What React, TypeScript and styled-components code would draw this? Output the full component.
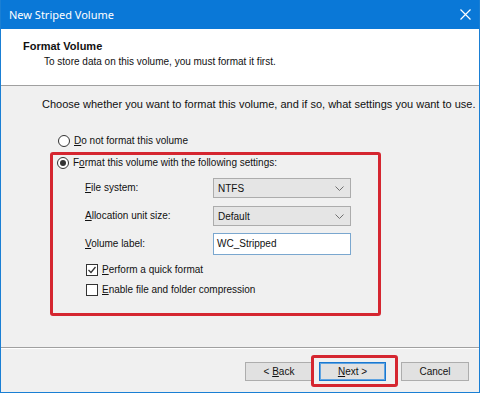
import React from "react";
import styled, { createGlobalStyle } from "styled-components";

const GlobalStyle = createGlobalStyle`
  html, body {
    margin: 0;
    padding: 0;
    background: #ffffff;
  }
`;

const Window = styled.div`
  width: 480px;
  height: 393px;
  box-sizing: border-box;
  border: 1px solid #1a7fd4;
  border-top: none;
  display: flex;
  flex-direction: column;
  font-family: "Liberation Sans", Arial, sans-serif;
  font-size: 10px;
  color: #111;
  background: #f0f0f0;
  overflow: hidden;
`;

const TitleBar = styled.div`
  height: 29px;
  flex: none;
  background: #0a78d7;
  display: flex;
  align-items: center;
  justify-content: space-between;
  padding: 0 0 0 9px;
  margin: 0 -1px;
`;

const TitleText = styled.span`
  font-family: "Noto Sans", "Open Sans", sans-serif;
  font-size: 11px;
  color: #ffffff;
`;

const CloseButton = styled.div`
  width: 30px;
  height: 29px;
  display: flex;
  align-items: center;
  justify-content: center;
`;

const Header = styled.div`
  height: 57px;
  flex: none;
  box-sizing: border-box;
  background: #ffffff;
  border-bottom: 1px solid #a0a0a0;
  padding: 10px 0 0 22px;
`;

const HeaderTitle = styled.div`
  font-weight: bold;
  font-size: 11px;
  line-height: 14px;
`;

const HeaderSub = styled.div`
  line-height: 14px;
  margin: 2px 0 0 21px;
`;

const Body = styled.div`
  flex: 1;
  padding: 11px 0 0 41px;
`;

const Intro = styled.div`
  font-size: 11px;
  line-height: 14px;
`;

const Choice = styled.label<{ top?: number; indent?: number }>`
  display: flex;
  align-items: center;
  gap: 4px;
  height: 14px;
  line-height: 14px;
  margin-top: ${(p) => p.top ?? 0}px;
  margin-left: ${(p) => p.indent ?? 0}px;
`;

const RadioDot = styled.span<{ checked?: boolean }>`
  width: 12px;
  height: 12px;
  flex: none;
  box-sizing: border-box;
  border-radius: 50%;
  border: 1px solid #333;
  background: #fff;
  display: flex;
  align-items: center;
  justify-content: center;
  &::after {
    content: "";
    width: 6px;
    height: 6px;
    border-radius: 50%;
    background: ${(p) => (p.checked ? "#333" : "transparent")};
  }
`;

const Highlight = styled.div`
  margin: 4px 0 0 8px;
  width: 331px;
  height: 164px;
  box-sizing: border-box;
  border: 3px solid #d52630;
  border-radius: 3px;
  padding: 1px 0 0 4px;
`;

const Settings = styled.div`
  display: grid;
  grid-template-columns: 128px 138px;
  grid-template-rows: 20px 20px 22px;
  row-gap: 8px;
  align-items: center;
  margin: 8px 0 0 28px;
  & > :nth-child(5),
  & > :nth-child(6) {
    margin-top: -3px;
  }
`;

const FieldLabel = styled.span`
  line-height: 14px;
`;

const Select = styled.div`
  height: 20px;
  box-sizing: border-box;
  background: #e5e5e5;
  border: 1px solid #acacac;
  display: flex;
  align-items: center;
  justify-content: space-between;
  padding: 0 6px 0 4px;
`;

const TextBox = styled.div`
  height: 22px;
  box-sizing: border-box;
  background: #ffffff;
  border: 1px solid #7aa7cf;
  display: flex;
  align-items: center;
  padding: 0 3px;
`;

const Checks = styled.div`
  margin: 7px 0 0 29px;
  display: flex;
  flex-direction: column;
  gap: 6px;
`;

const CheckBox = styled.span`
  width: 12px;
  height: 12px;
  flex: none;
  box-sizing: border-box;
  border: 1px solid #333;
  background: #fff;
  display: flex;
  align-items: center;
  justify-content: center;
`;

const Footer = styled.div`
  height: 45px;
  flex: none;
  box-sizing: border-box;
  border-top: 1px solid #a0a0a0;
  box-shadow: inset 0 1px 0 #ffffff;
  display: flex;
  justify-content: flex-end;
  align-items: flex-start;
  padding: 14px 10px 0 0;
`;

const ButtonSlot = styled.div<{ gap: number }>`
  position: relative;
  margin-left: ${(p) => p.gap}px;
`;

const Button = styled.div<{ primary?: boolean }>`
  width: ${(p) => (p.primary ? 67 : 68)}px;
  height: 19px;
  box-sizing: border-box;
  background: #e1e1e1;
  border: 1px solid ${(p) => (p.primary ? "#1a78d0" : "#adadad")};
  box-shadow: ${(p) => (p.primary ? "inset 0 0 0 1px #5fa3e0" : "none")};
  display: flex;
  align-items: center;
  justify-content: center;
  white-space: pre;
`;

const Callout = styled.div`
  position: absolute;
  left: -8px;
  top: -7px;
  width: 87px;
  height: 32px;
  box-sizing: border-box;
  border: 3px solid #d52630;
  border-radius: 3px;
  pointer-events: none;
`;

const Key = styled.u`
  text-decoration: underline;
  text-underline-offset: 1px;
`;

const Chevron = () => (
  <svg width="9" height="5" viewBox="0 0 9 5">
    <path d="M0.5 0.5 L4.5 4.5 L8.5 0.5" fill="none" stroke="#707070" strokeWidth="1" />
  </svg>
);

const Tick = () => (
  <svg width="10" height="10" viewBox="0 0 10 10">
    <path d="M1.5 5 L4 7.5 L8.5 2" fill="none" stroke="#333" strokeWidth="1.3" />
  </svg>
);

export default function App() {
  return (
    <>
      <GlobalStyle />
      <Window>
        <TitleBar>
          <TitleText>New Striped Volume</TitleText>
          <CloseButton>
            <svg width="11" height="11" viewBox="0 0 11 11">
              <path d="M0.5 0.5 L10.5 10.5 M10.5 0.5 L0.5 10.5" stroke="#fff" strokeWidth="1.2" />
            </svg>
          </CloseButton>
        </TitleBar>
        <Header>
          <HeaderTitle>Format Volume</HeaderTitle>
          <HeaderSub>To store data on this volume, you must format it first.</HeaderSub>
        </Header>
        <Body>
          <Intro>Choose whether you want to format this volume, and if so, what settings you want to use.</Intro>
          <Choice top={23} indent={16}>
            <RadioDot />
            <span>
              <Key>D</Key>o not format this volume
            </span>
          </Choice>
          <Highlight>
            <Choice>
              <RadioDot checked />
              <span>
                F<Key>o</Key>rmat this volume with the following settings:
              </span>
            </Choice>
            <Settings>
              <FieldLabel>
                <Key>F</Key>ile system:
              </FieldLabel>
              <Select>
                <span>NTFS</span>
                <Chevron />
              </Select>
              <FieldLabel>
                <Key>A</Key>llocation unit size:
              </FieldLabel>
              <Select>
                <span>Default</span>
                <Chevron />
              </Select>
              <FieldLabel>
                <Key>V</Key>olume label:
              </FieldLabel>
              <TextBox>WC_Stripped</TextBox>
            </Settings>
            <Checks>
              <Choice>
                <CheckBox>
                  <Tick />
                </CheckBox>
                <span>
                  <Key>P</Key>erform a quick format
                </span>
              </Choice>
              <Choice>
                <CheckBox />
                <span>
                  <Key>E</Key>nable file and folder compression
                </span>
              </Choice>
            </Checks>
          </Highlight>
        </Body>
        <Footer>
          <ButtonSlot gap={0}>
            <Button>
              {"< "}
              <Key>B</Key>ack
            </Button>
          </ButtonSlot>
          <ButtonSlot gap={6}>
            <Button primary>
              <Key>N</Key>
              {"ext >"}
            </Button>
            <Callout />
          </ButtonSlot>
          <ButtonSlot gap={15}>
            <Button>Cancel</Button>
          </ButtonSlot>
        </Footer>
      </Window>
    </>
  );
}
